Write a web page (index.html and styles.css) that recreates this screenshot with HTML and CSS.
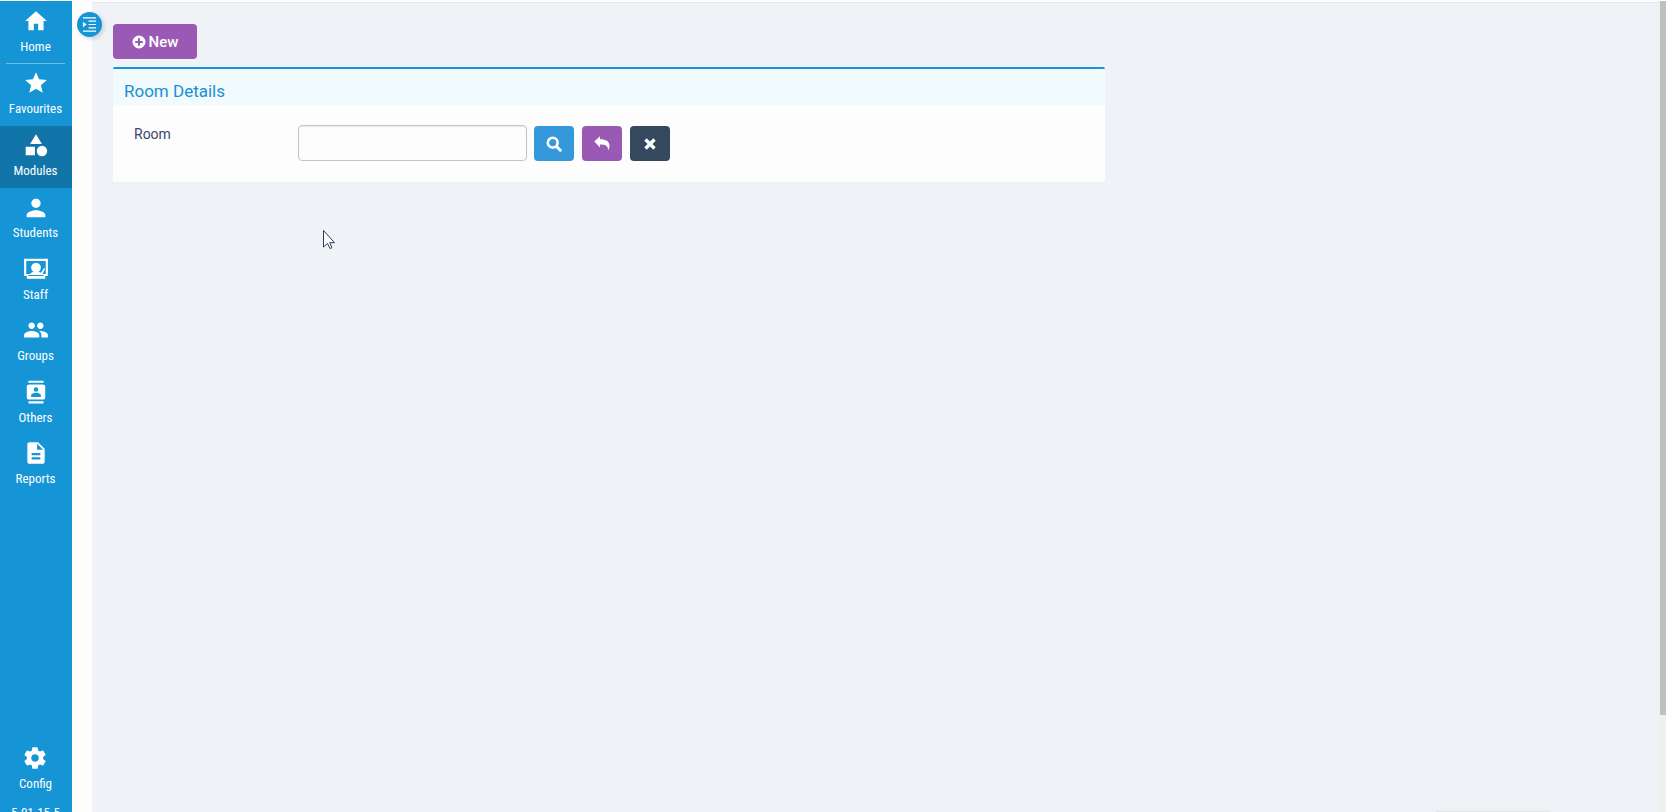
FILE: index.html
```html
<!DOCTYPE html>
<html lang="en">
<head>
<meta charset="utf-8">
<title>Room Details</title>
<link rel="stylesheet" href="styles.css">
</head>
<body>
<div class="app">
  <nav class="sidebar" aria-label="Main">
    <a class="item item-home" href="#"><svg class="icon" viewBox="0 0 24 24"><path d="M10 20.500v-6h4v6h5v-8.500h3L12 3 2 12h3v8.500z"/></svg><span>Home</span></a>
    <a class="item" href="#"><svg class="icon" viewBox="0 0 24 24"><path d="M12 17.270 18.180 21l-1.640-7.030L22 9.240l-7.190-.61L12 2 9.190 8.630 2 9.240l5.460 4.730L5.820 21z"/></svg><span>Favourites</span></a>
    <a class="item active" href="#" aria-current="page"><svg class="icon" viewBox="0 0 24 24"><path d="M12 2l-5.500 9h11zM2.500 13.500h8.500v8H2.500z"/><circle cx="17.500" cy="17.500" r="4.800"/></svg><span>Modules</span></a>
    <a class="item" href="#"><svg class="icon icon-large" viewBox="0 0 24 24"><path d="M12 12c2.210 0 4-1.790 4-4s-1.790-4-4-4-4 1.790-4 4 1.790 4 4 4zm0 2c-2.670 0-8 1.340-8 4v2h16v-2c0-2.660-5.330-4-8-4z"/></svg><span>Students</span></a>
    <a class="item" href="#"><svg class="icon" viewBox="0 0 24 24"><path fill-rule="evenodd" d="M1 2.500h22v16h-2.500V21h-17v-2.500H1zM3 4.500v12h3.500c1-1 2-1.600 3.200-1.900a4.500 4.500 0 1 1 4.600 0l2.200.9 3-4.500 1 .7-2.500 4.800H21v-12zM5 17.600v.9h14v-.9z"/></svg><span>Staff</span></a>
    <a class="item" href="#"><svg class="icon" viewBox="0 0 24 24"><path d="M16 11c1.660 0 2.990-1.340 2.990-3S17.660 5 16 5s-3 1.340-3 3 1.340 3 3 3zm-8 0c1.660 0 2.990-1.340 2.990-3S9.660 5 8 5 5 6.340 5 8s1.340 3 3 3zm0 2c-2.330 0-7 1.170-7 3.500V19h14v-2.500c0-2.330-4.670-3.500-7-3.500zm8 0c-.29 0-.62.020-.97.050 1.160.840 1.970 1.970 1.970 3.450V19h6v-2.500c0-2.330-4.670-3.500-7-3.500z"/></svg><span>Groups</span></a>
    <a class="item" href="#"><svg class="icon" viewBox="0 0 24 24"><path fill-rule="evenodd" d="M5 1.500h14v2H5zM5 20.500h14v2H5zM5.500 5h13a2 2 0 0 1 2 2v10a2 2 0 0 1-2 2h-13a2 2 0 0 1-2-2V7a2 2 0 0 1 2-2zM12 7.500a2.100 2.100 0 1 0 0 4.200 2.100 2.100 0 0 0 0-4.200zM7.500 16.500h9V15c0-1.500-3-2.300-4.500-2.300S7.500 13.500 7.500 15z"/></svg><span>Others</span></a>
    <a class="item" href="#"><svg class="icon" viewBox="0 0 24 24"><path d="M14 2H6c-1.100 0-1.990.9-1.990 2L4 20c0 1.100.890 2 1.990 2H18c1.100 0 2-.9 2-2V8l-6-6zm2 16H8v-2h8v2zm0-4H8v-2h8v2zm-3-5V3.500L18.500 9H13z"/></svg><span>Reports</span></a>
    <div class="sidebar-foot">
      <a class="item" href="#"><svg class="icon" viewBox="0 0 24 24"><path d="M19.430 12.980c.04-.32.070-.64.070-.98s-.03-.66-.07-.98l2.110-1.650c.19-.15.240-.42.120-.64l-2-3.460c-.12-.22-.39-.3-.61-.22l-2.490 1c-.52-.4-1.080-.73-1.690-.98l-.38-2.650C14.460 2.180 14.250 2 14 2h-4c-.25 0-.46.180-.49.420l-.38 2.650c-.61.250-1.170.590-1.690.980l-2.490-1c-.23-.09-.49 0-.61.220l-2 3.460c-.13.220-.07.490.120.640l2.110 1.650c-.04.320-.07.650-.07.980s.03.660.070.980l-2.110 1.650c-.19.150-.24.420-.12.640l2 3.460c.12.220.390.300.610.220l2.490-1c.52.400 1.080.730 1.690.980l.38 2.650c.03.240.24.420.49.420h4c.25 0 .46-.18.490-.42l.38-2.650c.61-.25 1.170-.59 1.690-.98l2.490 1c.23.090.490 0 .61-.22l2-3.460c.12-.22.070-.49-.12-.64zM12 15.500c-1.930 0-3.500-1.570-3.500-3.500s1.570-3.500 3.500-3.500 3.500 1.570 3.500 3.500-1.570 3.500-3.500 3.500z"/></svg><span>Config</span></a>
      <span class="version">5.01.15.5</span>
    </div>
  </nav>
  <div class="gutter">
    <button class="toggle" type="button" aria-label="Expand menu"><svg viewBox="0 0 16 16"><path d="M1 1h14M7 4.500h8M7 8h8M7 11.500h8M1 15h14" fill="none" stroke="currentColor" stroke-width="1.300"/><path d="M1 5l4 3-4 3z" fill="currentColor"/></svg></button>
  </div>
  <main class="content">
    <button class="btn btn-new" type="button"><svg viewBox="0 0 14 14"><path fill-rule="evenodd" d="M7 .5a6.500 6.500 0 1 0 0 13 6.500 6.500 0 0 0 0-13zM6 3.200h2V6h2.800v2H8v2.800H6V8H3.200V6H6z"/></svg>New</button>
    <section class="panel">
      <h1 class="panel-title">Room Details</h1>
      <form class="panel-body">
        <label for="room">Room</label>
        <input id="room" class="field" type="text">
        <div class="actions">
          <button class="btn btn-search" type="button" aria-label="Search"><svg viewBox="0 0 16 16"><circle cx="6.700" cy="6.700" r="4.900" fill="none" stroke="currentColor" stroke-width="2.600"/><path d="M10.500 10.500l3.800 3.800" stroke="currentColor" stroke-width="3" stroke-linecap="round"/></svg></button>
          <button class="btn btn-back" type="button" aria-label="Undo"><svg viewBox="0 0 16 16"><path d="M.3 5.500L6 .3v3c6 0 9.500 2 9.500 6.700 0 1.500-.5 3-1.500 4.300.3-4.600-2.500-5.800-8-5.800v3z"/></svg></button>
          <button class="btn btn-clear" type="button" aria-label="Clear"><svg viewBox="0 0 16 16"><path d="M4.700 4.700l6.600 6.600M11.300 4.700l-6.600 6.600" stroke="currentColor" stroke-width="3.400" stroke-linecap="square"/></svg></button>
        </div>
      </form>
    </section>
  </main>
  <div class="scrollbar"><div class="thumb"></div></div>
  <div class="toast"></div>
  <svg class="pointer" viewBox="0 0 12 19"><path d="M.5.500v16.500l4-3.500 2.500 5 2-.8-2.300-5h4.800z" fill="#fdfdfe" stroke="#2c3e5c"/></svg>
</div>
</body>
</html>
```
FILE: styles.css
```css
* { box-sizing: border-box; }
body { margin: 0; font-family: Roboto, "Liberation Sans", sans-serif; font-size: 14px; background: #eff3f8; }
.app { position: relative; display: flex; height: 100vh; overflow: hidden; border-top: 1px solid #fdfdfd; }
.sidebar { display: flex; flex-direction: column; width: 72px; padding-right: 1px; flex: none; background: #1595d6; }
.item { display: flex; flex-direction: column; align-items: center; flex: none; height: 62px; margin-right: -1px; padding: 6px 1px 0 0; color: #fff; text-decoration: none; font: 400 13px/18px "Roboto Condensed", Roboto, sans-serif; }
.item:nth-child(n+5) { height: 61px; }
.item:nth-child(2n+6) { height: 62px; }
.item-home { height: 63px; padding-top: 7px; background: linear-gradient(#6fc0e9, #6fc0e9) 6px bottom / 59px 1px no-repeat; }
.active { background: #1175a9; }
.icon { width: 26px; height: 26px; margin-bottom: 4px; fill: #fff; }
.icon-large { width: 30px; height: 28px; margin-bottom: 2px; }
.sidebar-foot { display: flex; flex-direction: column; align-items: center; margin-top: auto; height: 73px; flex: none; }
.version { padding-top: 3px; color: #fff; font: 400 13px/18px "Roboto Condensed", Roboto, sans-serif; }
.gutter { width: 20px; flex: none; background: #fdfdfd; }
.toggle { position: relative; display: flex; align-items: center; justify-content: center; width: 25px; height: 25px; margin: 11px 0 0 5px; padding: 0; border: 0; border-radius: 50%; background: #1595d6; color: #fff; box-shadow: 2px 2px 4px rgba(0,0,0,.15); }
.toggle svg { width: 15px; height: 15px; }
.content { flex: 1; padding: 21px 21px 0; box-shadow: inset 0 1px #fdfdfd, inset 0 2px #e4e6ea; }
.btn { display: flex; align-items: center; justify-content: center; height: 35px; padding: 0; border: 0; border-radius: 4px; color: #fff; fill: #fff; font: 500 15px/20px Roboto, sans-serif; }
.btn svg { width: 16px; height: 16px; }
.btn-new { width: 84px; gap: 3px; margin-top: 2px; background: #9b59b6; }
.btn-new svg { width: 14px; height: 14px; }
.panel { width: 65.100%; margin-top: 8px; border-top: 2px solid #1595d6; border-radius: 2px; background: #fdfdfd; }
.panel-title { margin: 0; padding: 12px 11px 0; height: 36px; background: #f1fafc; color: #1a90d4; font: 400 17px/20px Roboto, sans-serif; }
.panel-body { display: flex; padding: 20px 21px 21px; align-items: flex-start; }
label { width: 164px; color: #3b4672; font-size: 14px; line-height: 18px; }
.field { width: 229px; height: 36px; border: 1px solid #c4c4c4; border-radius: 4px; background: #fdfdfd; box-shadow: inset 0 1px 1px rgba(0,0,0,.08); }
.actions { display: flex; gap: 8px; padding: 1px 0 0 7px; }
.actions .btn { width: 40px; }
.btn-search { background: #3498db; }
.btn-back { background: #9b59b6; }
.btn-clear { background: #34495e; }
.scrollbar { width: 8px; flex: none; padding-left: 2px; background: #f0f0f0; }
.thumb { height: 88%; background: #bfc1c0; }
.toast { position: absolute; right: 116px; bottom: 0; width: 114px; height: 1px; background: #e6e6e6; box-shadow: 0 0 4px #ddd; }
.pointer { position: absolute; left: 323px; top: 229px; width: 12px; height: 19px; }
```
